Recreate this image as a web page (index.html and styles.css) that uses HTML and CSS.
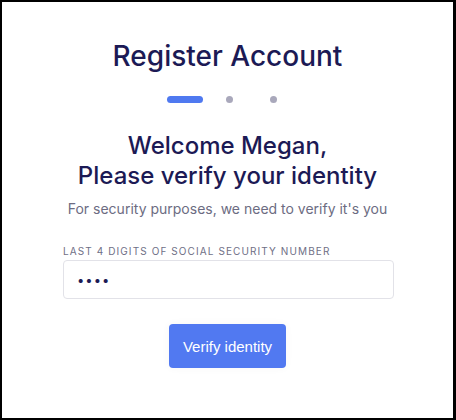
FILE: index.html
```html
<!DOCTYPE html>
<html>
<head>
<meta charset="utf-8">
<link rel="stylesheet" href="styles.css">
</head>
<body>
<div class="frame">
  <div class="card">
    <h1 class="title">Register Account</h1>
    <div class="steps">
      <span class="step active"></span>
      <span class="step"></span>
      <span class="step"></span>
    </div>
    <h2 class="heading">Welcome Megan,<br>Please verify your identity</h2>
    <p class="sub">For security purposes, we need to verify it's you</p>
    <label class="label">Last 4 digits of social security number</label>
    <div class="input"><span class="dots">••••</span></div>
    <button class="btn">Verify identity</button>
  </div>
</div>
</body>
</html>
```
FILE: styles.css
```css
html, body { margin: 0; padding: 0; }
body { background: #000; width: 456px; height: 420px; overflow: hidden; }
.frame { margin: 2px 0 0 2px; width: 451px; height: 416px; background: #fff; }
.card {
  display: flex; flex-direction: column; align-items: center;
  padding-top: 37px;
  font-family: Inter, "Noto Sans", sans-serif;
  color: #1c1a55;
}
.title { margin: 0; font-size: 28px; font-weight: 500; line-height: 34px; letter-spacing: 0; }
.steps { display: grid; grid-template-columns: repeat(3, 44px); justify-items: center; align-items: center; margin: 23px 0 0 3px; height: 7px; }
.step { width: 7px; height: 7px; border-radius: 50%; background: #a9a8bb; }
.step.active { width: 36px; border-radius: 4px; background: #4f79f0; }
.heading { margin: 28px 0 0; font-size: 24px; font-weight: 500; line-height: 30px; text-align: center; }
.sub { margin: 9px 0 0; font-size: 14px; color: #6c6c82; line-height: 18px; }
.label { align-self: flex-start; margin: 27px 0 0 61px; font-size: 10px; letter-spacing: 1.1px; text-transform: uppercase; color: #6f6f86; line-height: 12px; }
.input { align-self: flex-start; margin: 3px 0 0 61px; box-sizing: border-box; width: 331px; height: 39px; border: 1px solid #e2e2e8; border-radius: 4px; display: flex; align-items: center; padding-left: 13px; }
.dots { font-size: 13px; color: #1c1a55; letter-spacing: 1px; }
.btn {
  margin-top: 25px; width: 117px; height: 44px; border: none; border-radius: 4px;
  background: #5179f1; color: #fff; font-family: "Liberation Sans", Arial, sans-serif; font-size: 15px;
  box-shadow: 0 0 8px rgba(0,0,0,0.04); padding: 0;
}
```
